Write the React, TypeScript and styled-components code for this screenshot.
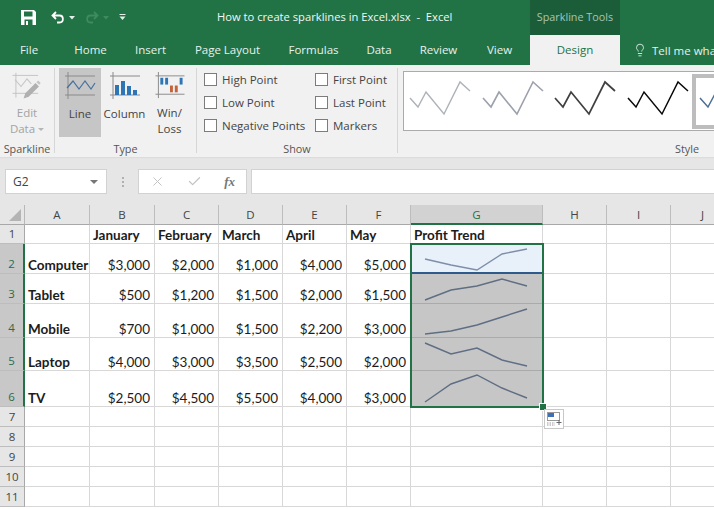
import React from 'react'
import styled, { createGlobalStyle } from 'styled-components'
import { Check, Lightbulb, X } from 'lucide-react'

const UI_FONT = '"Open Sans", "Noto Sans", sans-serif'
const CELL_FONT = 'Lato, "Open Sans", sans-serif'

const GlobalStyle = createGlobalStyle`
    html, body {
        margin: 0;
        padding: 0;
        background: #fff;
    }
    * {
        box-sizing: border-box;
    }
`

const Page = styled.div`
    width: 714px;
    height: 509px;
    overflow: hidden;
    display: flex;
    flex-direction: column;
    font-family: ${UI_FONT};
    background: #fff;
`

/* title bar */
const TitleBar = styled.div`
    height: 35px;
    flex: none;
    display: flex;
    background: #217346;
    color: #fff;
`
const QuickAccess = styled.div`
    width: 217px;
    flex: none;
    display: flex;
    align-items: center;
    padding-left: 21px;
`
const QuickButton = styled.svg<{ $gap: number }>`
    display: block;
    flex: none;
    margin-right: ${p => p.$gap}px;
`
const DocTitle = styled.div`
    width: 313px;
    flex: none;
    font-size: 11.2px;
    line-height: 33px;
    white-space: pre;
    color: #f2f7f4;
`
const ContextTitle = styled.div`
    width: 90px;
    flex: none;
    background: #1c5d39;
    color: #a6c6b3;
    font-size: 10.8px;
    line-height: 33px;
    text-align: center;
    white-space: nowrap;
`

/* ribbon tabs */
const TabBar = styled.div`
    height: 30px;
    flex: none;
    display: flex;
    background: #217346;
`
const Tab = styled.div<{ $width: number; $active?: boolean }>`
    width: ${p => p.$width}px;
    flex: none;
    text-align: center;
    font-size: 11.5px;
    line-height: 29px;
    white-space: nowrap;
    color: ${p => (p.$active ? '#217346' : '#e8f1ec')};
    background: ${p => (p.$active ? '#f1f1f1' : 'transparent')};
`
const TellMe = styled.div`
    flex: none;
    margin-left: 13px;
    display: flex;
    align-items: center;
    gap: 5px;
    font-size: 11.5px;
    color: #e8f1ec;
    white-space: nowrap;
`

/* ribbon body */
const Ribbon = styled.div`
    height: 92px;
    flex: none;
    display: flex;
    background: #f1f1f1;
    padding-top: 3px;
    box-shadow: 0 1px 1px #dcdcdc;
    position: relative;
`
const Group = styled.div<{ $width: number; $last?: boolean }>`
    width: ${p => p.$width}px;
    flex: none;
    height: 85px;
    display: flex;
    flex-direction: column;
    border-right: ${p => (p.$last ? 'none' : '1px solid #d6d6d6')};
`
const GroupBody = styled.div`
    flex: 1;
    min-height: 0;
    display: flex;
`
const GroupLabel = styled.div<{ $align?: string }>`
    height: 16px;
    font-size: 10.8px;
    line-height: 24px;
    color: #555;
    text-align: ${p => p.$align || 'center'};
    padding-right: ${p => (p.$align === 'right' ? '15px' : '0')};
    white-space: nowrap;
`
const BigButton = styled.div<{ $width: number; $on?: boolean; $off?: boolean }>`
    width: ${p => p.$width}px;
    height: 69px;
    flex: none;
    display: flex;
    flex-direction: column;
    align-items: center;
    padding-top: 4px;
    background: ${p => (p.$on ? '#c6c6c6' : 'transparent')};
    color: ${p => (p.$off ? '#a3a3a3' : '#444')};
    font-size: 11.5px;
    line-height: 16px;
    text-align: center;
    white-space: nowrap;
`
const ButtonText = styled.div`
    margin-top: 4px;
`
const TinyCaret = styled.span`
    display: inline-block;
    margin-left: 3px;
    vertical-align: middle;
    border-left: 3px solid transparent;
    border-right: 3px solid transparent;
    border-top: 3px solid #b5b5b5;
`
const TypeButtons = styled(GroupBody)`
    padding-left: 4px;
    gap: 1px;
`
const ShowGrid = styled.div`
    display: grid;
    grid-template-columns: 111px 80px;
    grid-auto-rows: 23px;
    padding-left: 7px;
`
const CheckRow = styled.label`
    display: flex;
    align-items: center;
    gap: 5px;
    font-size: 11.5px;
    color: #444;
    white-space: nowrap;
`
const CheckBox = styled.span`
    width: 13px;
    height: 13px;
    flex: none;
    background: #fff;
    border: 1px solid #7c7c7c;
`
const Gallery = styled.div`
    margin: 3px 0 0 5px;
    height: 60px;
    flex: 1;
    display: flex;
    background: #fff;
    border: 1px solid #ababab;
    border-right: none;
    overflow: hidden;
    padding: 4px 0 0 3px;
`
const Thumb = styled.div<{ $selected?: boolean }>`
    width: 72.5px;
    flex: none;
    height: ${p => (p.$selected ? '55px' : '52px')};
    margin: ${p => (p.$selected ? '-2px 0 0 -5px' : '0')};
    border: ${p => (p.$selected ? '4px solid #bdbdbd' : 'none')};
    padding-left: ${p => (p.$selected ? '1px' : '0')};
    svg {
        display: block;
        margin-top: ${p => (p.$selected ? '-2px' : '0')};
    }
`

/* formula bar */
const FormulaBand = styled.div`
    height: 48px;
    flex: none;
    display: flex;
    align-items: flex-start;
    padding: 12px 0 0 5px;
    background: #e6e6e6;
`
const NameBox = styled.div`
    width: 102px;
    height: 25px;
    flex: none;
    display: flex;
    align-items: center;
    justify-content: space-between;
    padding: 0 8px 0 7px;
    background: #fff;
    border: 1px solid #d2d2d2;
    font-size: 12px;
    color: #444;
`
const Caret = styled.span`
    border-left: 4px solid transparent;
    border-right: 4px solid transparent;
    border-top: 4px solid #777;
`
const Dots = styled.div`
    width: 31px;
    flex: none;
    height: 25px;
    display: flex;
    flex-direction: column;
    align-items: center;
    justify-content: center;
    gap: 2px;
    span {
        width: 2px;
        height: 2px;
        background: #b0b0b0;
    }
`
const FxBox = styled.div`
    width: 109px;
    height: 25px;
    flex: none;
    display: flex;
    align-items: center;
    justify-content: space-between;
    padding: 0 11px 0 11px;
    background: #fff;
    border: 1px solid #d2d2d2;
    color: #c4c4c4;
`
const FxText = styled.span`
    font-family: "Liberation Serif", serif;
    font-style: italic;
    font-weight: 700;
    font-size: 13px;
    color: #777;
`
const FormulaInput = styled.div`
    flex: 1;
    height: 25px;
    margin-left: 4px;
    background: #fff;
    border: 1px solid #d2d2d2;
    border-right: none;
`

/* worksheet */
const Sheet = styled.div`
    flex: 1;
    display: grid;
    grid-template-columns: 25px 65px 65px 64px 64px 64px 64px 132px 64px 64px 64px;
    grid-template-rows: 20px 19px 30px 30px 34px 33px 36px 20px 20px 20px 20px 20px;
    font-family: ${CELL_FONT};
    font-size: 13.5px;
    color: #1a1a1a;
    position: relative;
`
const Corner = styled.div`
    background: #e6e6e6;
    border-right: 1px solid #b8b8b8;
    border-bottom: 1px solid #a8a8a8;
    position: relative;
    &::after {
        content: '';
        position: absolute;
        right: 3px;
        bottom: 3px;
        border-left: 12px solid transparent;
        border-bottom: 12px solid #b4b4b4;
    }
`
const ColHead = styled.div<{ $active?: boolean }>`
    display: flex;
    align-items: center;
    justify-content: center;
    background: ${p => (p.$active ? '#d2d2d2' : '#e6e6e6')};
    border-right: 1px solid #bdbdbd;
    border-bottom: ${p => (p.$active ? '2px solid #217346' : '1px solid #a8a8a8')};
    color: ${p => (p.$active ? '#217346' : '#444')};
    font-family: ${UI_FONT};
    font-size: 11.5px;
`
const RowHead = styled.div<{ $active?: boolean }>`
    display: flex;
    align-items: flex-end;
    justify-content: center;
    padding-bottom: 2px;
    background: ${p => (p.$active ? '#c8c8c8' : '#e6e6e6')};
    border-right: ${p => (p.$active ? '2px solid #217346' : '1px solid #a8a8a8')};
    border-bottom: 1px solid #bdbdbd;
    color: ${p => (p.$active ? '#2c6b49' : '#444')};
    font-family: ${UI_FONT};
    font-size: 11.5px;
`
const Cell = styled.div<{ $bold?: boolean; $right?: boolean }>`
    display: flex;
    align-items: flex-end;
    justify-content: ${p => (p.$right ? 'flex-end' : 'flex-start')};
    padding: 0 4px 0 3px;
    border-right: 1px solid #d8d8d8;
    border-bottom: 1px solid #d8d8d8;
    font-weight: ${p => (p.$bold ? 700 : 400)};
    white-space: nowrap;
    overflow: hidden;
    color: #1c1c1c;
`
const SparkCell = styled.div<{ $first?: boolean }>`
    background: ${p => (p.$first ? '#e8f0fa' : '#c6c6c6')};
    border-bottom: ${p => (p.$first ? '2px solid #2f5a8c' : '1px solid #aaaaaa')};
    svg {
        display: block;
    }
`
const Selection = styled.div`
    grid-column: 8 / 9;
    grid-row: 3 / 8;
    position: absolute;
    top: -1px;
    left: -1px;
    right: -1px;
    bottom: -1px;
    border: 2px solid #217346;
    pointer-events: none;
`
const FillHandle = styled.div`
    position: absolute;
    right: -4px;
    bottom: -4px;
    width: 6px;
    height: 6px;
    background: #217346;
    outline: 1px solid #fff;
`
const PasteTag = styled.div`
    position: absolute;
    left: 132px;
    top: 164px;
    width: 20px;
    height: 20px;
    background: #fff;
    border: 1px solid #c8c8c8;
    display: flex;
    align-items: center;
    justify-content: center;
`

const chartAxes = '#8a8a8a'

const SaveIcon = () => (
    <QuickButton $gap={15} width="15" height="15" viewBox="0 0 15 15">
        <path d="M0 0H13L15 2V15H0Z" fill="#fff" />
        <rect x="3" y="1.5" width="8.5" height="5" fill="#217346" />
        <rect x="3.5" y="9.5" width="8" height="5.5" fill="#217346" />
        <rect x="5" y="11" width="2" height="4" fill="#fff" />
    </QuickButton>
)

const UndoIcon = ({ color, flip }: { color: string; flip?: boolean }) => (
    <QuickButton $gap={4} width="14" height="13" viewBox="0 0 14 13" style={flip ? { transform: 'scaleX(-1)' } : undefined}>
        <path d="M5 1L1.5 4.5L5 8M2 4.5H8.5C13 4.5 13 11.5 8.5 11.5H6" fill="none" stroke={color} strokeWidth="1.8" />
    </QuickButton>
)

const MiniCaret = ({ color, gap }: { color: string; gap: number }) => (
    <QuickButton $gap={gap} width="6" height="4" viewBox="0 0 6 4">
        <path d="M0 0H6L3 3.5Z" fill={color} />
    </QuickButton>
)

const CustomizeIcon = () => (
    <QuickButton $gap={0} width="7" height="7" viewBox="0 0 7 7">
        <rect x="0.5" y="0" width="6" height="1" fill="#e4efe9" />
        <path d="M0.5 2.5H6.5L3.5 6Z" fill="#e4efe9" />
    </QuickButton>
)

const EditDataIcon = () => (
    <svg width="34" height="34" viewBox="0 0 34 34">
        <path d="M4 1V30M0 4H30M0 25H30" fill="none" stroke="#bdbdbd" strokeWidth="1" />
        <path d="M3 9L10 17L17 8L22 14" fill="none" stroke="#c6c6c6" strokeWidth="1.2" />
        <path d="M13 31L15 25L27 13L31 17L19 29Z" fill="#b0b0b0" />
        <path d="M28 12L30 10L33 13L31.5 15Z" fill="#c4c4c4" />
    </svg>
)

const LineIcon = () => (
    <svg width="32" height="30" viewBox="0 0 32 30">
        <path d="M4 0V27M1 4H31M1 23H31" fill="none" stroke={chartAxes} strokeWidth="1" />
        <path d="M3 16L9 9L15 17L21 9L27 17L31 11" fill="none" stroke="#45709c" strokeWidth="1.2" />
    </svg>
)

const ColumnIcon = () => (
    <svg width="32" height="30" viewBox="0 0 32 30">
        <path d="M4 0V27M1 4H31M1 23H31" fill="none" stroke={chartAxes} strokeWidth="1" />
        <rect x="6" y="13" width="4" height="10" fill="#2e75b6" />
        <rect x="12" y="9" width="4" height="14" fill="#2e75b6" />
        <rect x="18" y="14" width="4" height="9" fill="#2e75b6" />
        <rect x="24" y="18" width="4" height="5" fill="#2e75b6" />
    </svg>
)

const WinLossIcon = () => (
    <svg width="32" height="30" viewBox="0 0 32 30">
        <path d="M4 0V27M1 4H31M1 23H31" fill="none" stroke={chartAxes} strokeWidth="1" />
        <rect x="6" y="6" width="3" height="7" fill="#2e75b6" />
        <rect x="11" y="6" width="3" height="7" fill="#2e75b6" />
        <rect x="16" y="14" width="3" height="7" fill="#c4623c" />
        <rect x="21" y="14" width="3" height="7" fill="#c4623c" />
        <rect x="26" y="6" width="3" height="7" fill="#2e75b6" />
    </svg>
)

const thumbs = [
    { color: '#aeb2b9', width: 1.4 },
    { color: '#9ca1ac', width: 1.6 },
    { color: '#404040', width: 1.7 },
    { color: '#0a0a0a', width: 1.5 },
    { color: '#4d6f95', width: 1.5 },
]

const checks = ['High Point', 'First Point', 'Low Point', 'Last Point', 'Negative Points', 'Markers']

const tabs = [
    { label: 'File', width: 58 },
    { label: 'Home', width: 65 },
    { label: 'Insert', width: 55 },
    { label: 'Page Layout', width: 99 },
    { label: 'Formulas', width: 73 },
    { label: 'Data', width: 58 },
    { label: 'Review', width: 61 },
    { label: 'View', width: 61 },
]

const columns = ['A', 'B', 'C', 'D', 'E', 'F', 'G', 'H', 'I', 'J']
const months = ['January', 'February', 'March', 'April', 'May']

const rows = [
    { n: 2, height: 30, name: 'Computer', values: ['$3,000', '$2,000', '$1,000', '$4,000', '$5,000'], spark: [15, 21, 26, 10, 5] },
    { n: 3, height: 30, name: 'Tablet', values: ['$500', '$1,200', '$1,500', '$2,000', '$1,500'], spark: [26, 16, 12, 5, 12] },
    { n: 4, height: 34, name: 'Mobile', values: ['$700', '$1,000', '$1,500', '$2,200', '$3,000'], spark: [30, 27, 21, 13, 5] },
    { n: 5, height: 33, name: 'Laptop', values: ['$4,000', '$3,000', '$3,500', '$2,500', '$2,000'], spark: [5, 16, 10, 22, 28] },
    { n: 6, height: 36, name: 'TV', values: ['$2,500', '$4,500', '$5,500', '$4,000', '$3,000'], spark: [31, 13, 4, 17, 27] },
]

const sparkX = [14, 40, 66, 91, 116]

const Spark = ({ ys, height, color }: { ys: number[]; height: number; color: string }) => (
    <svg width="132" height={height} viewBox={`0 0 132 ${height}`}>
        <polyline points={ys.map((y, i) => `${sparkX[i]},${y}`).join(' ')} fill="none" stroke={color} strokeWidth="1.4" />
    </svg>
)

const emptyRows = [7, 8, 9, 10, 11]

export default function App() {
    return (
        <Page>
            <GlobalStyle />
            <TitleBar>
                <QuickAccess>
                    <SaveIcon />
                    <UndoIcon color="#fff" />
                    <MiniCaret color="#e4efe9" gap={10} />
                    <UndoIcon color="#3f8a5f" flip />
                    <MiniCaret color="#3f8a5f" gap={10} />
                    <CustomizeIcon />
                </QuickAccess>
                <DocTitle>How to create sparklines in Excel.xlsx  -  Excel</DocTitle>
                <ContextTitle>Sparkline Tools</ContextTitle>
            </TitleBar>
            <TabBar>
                {tabs.map(t => (
                    <Tab key={t.label} $width={t.width}>{t.label}</Tab>
                ))}
                <Tab $width={90} $active>Design</Tab>
                <TellMe>
                    <Lightbulb size={14} strokeWidth={1.5} />
                    Tell me what you want to do
                </TellMe>
            </TabBar>
            <Ribbon>
                <Group $width={55}>
                    <GroupBody>
                        <BigButton $width={54} $off>
                            <EditDataIcon />
                            <ButtonText>Edit<br />Data<TinyCaret /></ButtonText>
                        </BigButton>
                    </GroupBody>
                    <GroupLabel>Sparkline</GroupLabel>
                </Group>
                <Group $width={142}>
                    <TypeButtons>
                        <BigButton $width={42} $on>
                            <LineIcon />
                            <ButtonText>Line</ButtonText>
                        </BigButton>
                        <BigButton $width={45}>
                            <ColumnIcon />
                            <ButtonText>Column</ButtonText>
                        </BigButton>
                        <BigButton $width={43}>
                            <WinLossIcon />
                            <ButtonText>Win/<br />Loss</ButtonText>
                        </BigButton>
                    </TypeButtons>
                    <GroupLabel>Type</GroupLabel>
                </Group>
                <Group $width={201}>
                    <GroupBody>
                        <ShowGrid>
                            {checks.map(c => (
                                <CheckRow key={c}>
                                    <CheckBox />
                                    {c}
                                </CheckRow>
                            ))}
                        </ShowGrid>
                    </GroupBody>
                    <GroupLabel>Show</GroupLabel>
                </Group>
                <Group $width={316} $last>
                    <GroupBody>
                        <Gallery>
                            {thumbs.map((t, i) => (
                                <Thumb key={i} $selected={i === 4}>
                                    <svg width="72" height="50" viewBox="0 0 72 50">
                                        <polyline
                                            points="3,22 11,31 19,16 37,38 53,6 63,15"
                                            fill="none"
                                            stroke={t.color}
                                            strokeWidth={t.width}
                                        />
                                    </svg>
                                </Thumb>
                            ))}
                        </Gallery>
                    </GroupBody>
                    <GroupLabel $align="right">Style</GroupLabel>
                </Group>
            </Ribbon>
            <FormulaBand>
                <NameBox>
                    G2
                    <Caret />
                </NameBox>
                <Dots>
                    <span />
                    <span />
                    <span />
                </Dots>
                <FxBox>
                    <X size={15} strokeWidth={1.6} />
                    <Check size={15} strokeWidth={2} />
                    <FxText>fx</FxText>
                </FxBox>
                <FormulaInput />
            </FormulaBand>
            <Sheet>
                <Corner />
                {columns.map(c => (
                    <ColHead key={c} $active={c === 'G'}>{c}</ColHead>
                ))}

                <RowHead>1</RowHead>
                <Cell />
                {months.map(m => (
                    <Cell key={m} $bold>{m}</Cell>
                ))}
                <Cell $bold>Profit Trend</Cell>
                <Cell />
                <Cell />
                <Cell />

                {rows.map((r, i) => (
                    <React.Fragment key={r.n}>
                        <RowHead $active>{r.n}</RowHead>
                        <Cell $bold>{r.name}</Cell>
                        {r.values.map((v, j) => (
                            <Cell key={j} $right>{v}</Cell>
                        ))}
                        <SparkCell $first={i === 0}>
                            <Spark ys={r.spark} height={r.height} color={i === 0 ? '#7d8fa8' : '#5f6e84'} />
                        </SparkCell>
                        <Cell />
                        <Cell />
                        <Cell />
                    </React.Fragment>
                ))}

                {emptyRows.map(n => (
                    <React.Fragment key={n}>
                        <RowHead>{n}</RowHead>
                        {columns.map(c => (
                            <Cell key={c} />
                        ))}
                    </React.Fragment>
                ))}

                <Selection>
                    <FillHandle />
                    <PasteTag>
                        <svg width="15" height="14" viewBox="0 0 15 14">
                            <rect x="0.5" y="0.5" width="12" height="8" fill="#fff" stroke="#9a9a9a" />
                            <rect x="1" y="1" width="6" height="4" fill="#3f6fb5" />
                            <path d="M0 11H8M0 13H8" stroke="#9a9a9a" strokeDasharray="1.5 1" />
                            <path d="M12 8V13M9.5 10.5H14.5" stroke="#666" />
                        </svg>
                    </PasteTag>
                </Selection>
            </Sheet>
        </Page>
    )
}
